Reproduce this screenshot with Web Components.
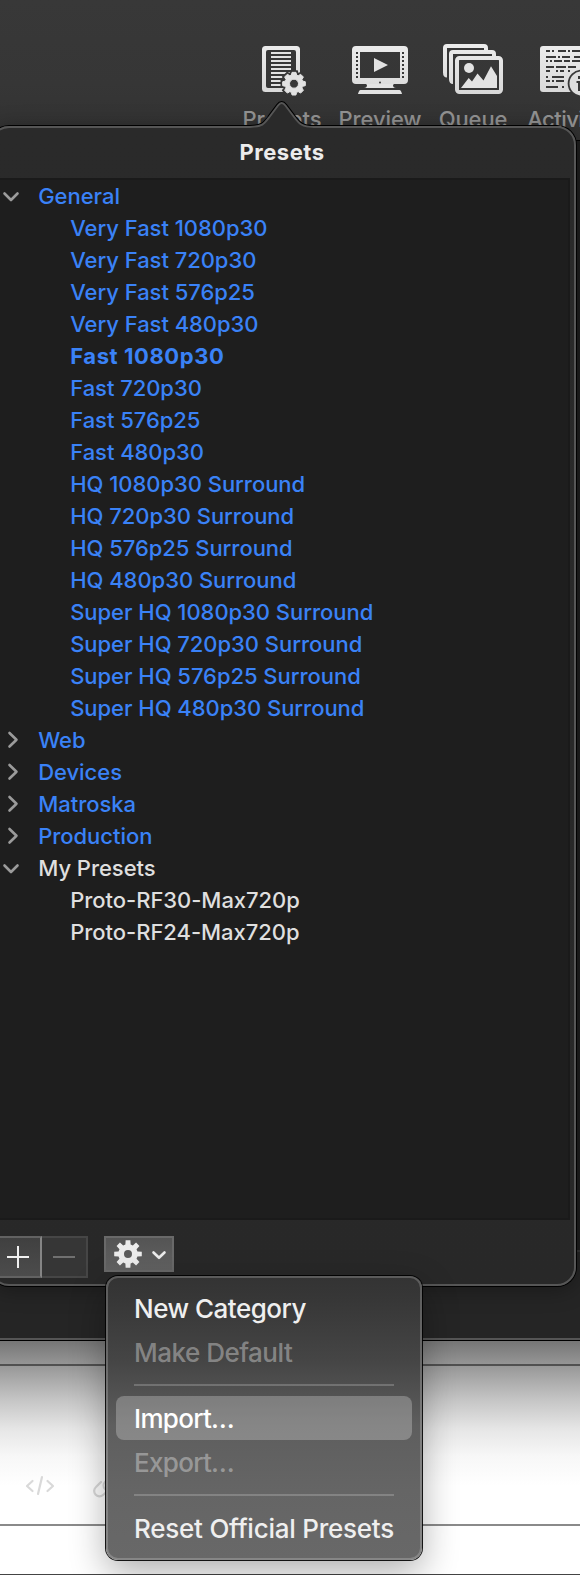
<!DOCTYPE html>
<html lang="en">
<head>
<meta charset="utf-8">
<title>Presets</title>
<style>
    html, body { margin: 0; }
    body {
        position: relative;
        width: 580px;
        height: 1575px;
        overflow: hidden;
        background: #fff;
        font-family: Inter, "Liberation Sans", sans-serif;
        font-size: 22px;
    }
</style>
</head>
<body>
<app-window></app-window>
<editor-page></editor-page>
<preset-popover heading="Presets">
    <preset-row open>General</preset-row>
    <preset-row child>Very Fast 1080p30</preset-row>
    <preset-row child>Very Fast 720p30</preset-row>
    <preset-row child>Very Fast 576p25</preset-row>
    <preset-row child>Very Fast 480p30</preset-row>
    <preset-row child default>Fast 1080p30</preset-row>
    <preset-row child>Fast 720p30</preset-row>
    <preset-row child>Fast 576p25</preset-row>
    <preset-row child>Fast 480p30</preset-row>
    <preset-row child>HQ 1080p30 Surround</preset-row>
    <preset-row child>HQ 720p30 Surround</preset-row>
    <preset-row child>HQ 576p25 Surround</preset-row>
    <preset-row child>HQ 480p30 Surround</preset-row>
    <preset-row child>Super HQ 1080p30 Surround</preset-row>
    <preset-row child>Super HQ 720p30 Surround</preset-row>
    <preset-row child>Super HQ 576p25 Surround</preset-row>
    <preset-row child>Super HQ 480p30 Surround</preset-row>
    <preset-row>Web</preset-row>
    <preset-row>Devices</preset-row>
    <preset-row>Matroska</preset-row>
    <preset-row>Production</preset-row>
    <preset-row open custom>My Presets</preset-row>
    <preset-row child custom>Proto-RF30-Max720p</preset-row>
    <preset-row child custom>Proto-RF24-Max720p</preset-row>
    <preset-actions slot="footer"></preset-actions>
</preset-popover>
<action-menu>
    <menu-item>New Category</menu-item>
    <menu-item disabled>Make Default</menu-item>
    <menu-line></menu-line>
    <menu-item active style="--tracking: -0.7px">Import…</menu-item>
    <menu-item disabled style="--tracking: -0.7px">Export…</menu-item>
    <menu-line></menu-line>
    <menu-item style="--tracking: -0.24px">Reset Official Presets</menu-item>
</action-menu>

<script>
// shared base: clones the template markup into an open shadow root
class BaseElement extends HTMLElement {
    constructor() {
        super();
        this.attachShadow({ mode: "open" });
        const template = document.createElement("template");
        template.innerHTML = this.constructor.markup;
        this.shadowRoot.appendChild(template.content.cloneNode(true));
    }
}

// cog outline: square-ish teeth around a ring, with a round hole
function gearPath(cx, cy, body, outer, hole, inner, tip) {
    let d = "";
    for (let i = 0; i < 8; i++) {
        const a = i * Math.PI / 4;
        [[body, -inner], [outer, -tip], [outer, tip], [body, inner]].forEach(([r, off], j) => {
            d += (i + j ? "L" : "M") + (cx + r * Math.cos(a + off)).toFixed(2) + " " + (cy + r * Math.sin(a + off)).toFixed(2);
        });
    }
    return d + `ZM${cx - hole} ${cy}a${hole} ${hole} 0 1 0 ${hole * 2} 0a${hole} ${hole} 0 1 0 ${-hole * 2} 0Z`;
}

// draws [x, width] runs as 2px bars
function bars(rows) {
    return rows.map(([y, ...runs]) => runs.map(([x, w]) => `<rect x="${x}" y="${y}" width="${w}" height="2"/>`).join("")).join("");
}

const ICONS = {
    presets: { x: 250, art: `
        <path fill="url(#g)" fill-rule="evenodd" d="M265.500 46h31a3.500 3.500 0 0 1 3.500 3.500v39a3.500 3.500 0 0 1-3.500 3.500h-31a3.500 3.500 0 0 1-3.500-3.500v-39a3.500 3.500 0 0 1 3.500-3.500zM268 50a2 2 0 0 0-2 2v34a2 2 0 0 0 2 2h26a2 2 0 0 0 2-2V52a2 2 0 0 0-2-2z"/>
        <g fill="#e2e2e2">${bars([52, 56, 60, 64, 68, 72, 76, 80, 84].map(y => [y, [271, 20]]))}</g>
        <path fill="#373737" stroke="#373737" stroke-width="3.500" d="${gearPath(294, 83.7, 9.4, 12, .1, .34, .2)}"/>
        <path fill="#e2e2e2" stroke="#e2e2e2" stroke-linejoin="round" fill-rule="evenodd" d="${gearPath(294, 83.7, 9, 11.5, 4.5, .3, .17)}"/>` },
    preview: { x: 348, art: `
        <path fill="url(#g)" fill-rule="evenodd" d="M356 46h48a4 4 0 0 1 4 4v30a4 4 0 0 1-4 4h-48a4 4 0 0 1-4-4V50a4 4 0 0 1 4-4zM360 52v26h40V52z"/>
        <path fill="#e2e2e2" d="M374 58l14 7-14 7zM366 84h28l-1 1q0 3 3 3h-32q3 0 3-3zM360.500 90h39q1.500 0 2.500 4h-44q1-4 2.500-4z"/>
        <g fill="#373737">${bars([52, 56, 60, 64, 68, 72, 76].map(y => [y, [356, 2], [402, 2]]))}<circle cx="380" cy="82.400" r="1"/></g>` },
    queue: { x: 441, art: `
        <g fill="none" stroke="url(#g)" stroke-width="4">
            <path d="M447 75.500q-2 0-2-3V48q0-2 2-2h37q2 0 2 2v2.500"/>
            <path d="M453 82q-2 0-2-3V54q0-2 2-2h39q2 0 2 2v2.500"/>
            <rect x="457" y="58" width="44" height="34" rx="2.500"/>
        </g>
        <circle cx="469" cy="68" r="5" fill="#e2e2e2"/>
        <path fill="#e2e2e2" d="M461 88l7.700-10 3.300 3.500 5.500-8 6 7 7.500-14.300 6 9.800v12z"/>` },
    activity: { x: 533, art: `
        <rect x="540" y="46" width="50" height="46" rx="3" fill="url(#g)"/>
        <g fill="#373737">${bars([
            [50, [546, 4], [552, 2], [558, 8], [568, 2], [572, 8]],
            [56, [546, 10], [558, 2], [562, 8], [574, 6]],
            [60, [546, 2], [550, 2], [554, 8], [564, 6], [572, 8]],
            [66, [546, 8], [556, 10], [568, 8]],
            [70, [546, 4], [556, 2], [560, 4], [568, 2]],
            [76, [546, 2], [552, 12]],
            [80, [546, 4], [552, 2], [556, 8]],
            [86, [546, 12], [562, 2]]
        ])}</g>
        <circle cx="581.500" cy="83.500" r="13.800" fill="#373737"/>
        <circle cx="581.500" cy="83.500" r="12" fill="#dedede"/>
        <path fill="#373737" d="M576.500 81h6v10h-4.500v-8h-1.500zM578 76h4v3h-4z"/>` }
};

class ToolbarItem extends BaseElement {
    static markup = `
        <style>
            :host { display: flex; flex: none; flex-direction: column; align-items: center; width: var(--w); }
            svg { display: block; flex: none; }
            span { margin-top: 5px; line-height: 32px; font-weight: 500; letter-spacing: var(--tracking, 0); color: #939393; white-space: nowrap; }
        </style>
        <svg width="64" height="56"></svg>
        <span><slot></slot></span>`;
    connectedCallback() {
        const icon = ICONS[this.getAttribute("icon")];
        const svg = this.shadowRoot.querySelector("svg");
        svg.setAttribute("viewBox", `${icon.x} 42 64 56`);
        svg.innerHTML = `<defs><linearGradient id="g" gradientUnits="userSpaceOnUse" x1="0" y1="44" x2="0" y2="94"><stop stop-color="#ececec"/><stop offset="1" stop-color="#d8d8d8"/></linearGradient></defs>${icon.art}`;
    }
}
customElements.define("toolbar-item", ToolbarItem);

class AppWindow extends BaseElement {
    static markup = `
        <style>
            :host { display: flex; flex-direction: column; box-sizing: border-box; height: 1341px; background: #1e1e1e; border-bottom: 1px solid #000; }
            .toolbar { display: flex; gap: 18px; box-sizing: border-box; height: 141px; padding: 42px 0 0 243px; overflow: hidden; background: linear-gradient(#383838, #363636 60%, #323232); border-bottom: 1px solid #000; }
            .body { flex: 1; }
            .status { box-sizing: border-box; height: 90px; border-top: 2px solid #343434; border-bottom: 2px solid #555; background: #252525; }
        </style>
        <div class="toolbar">
            <toolbar-item icon="presets" style="--w: 78px">Presets</toolbar-item>
            <toolbar-item icon="preview" style="--w: 82px; --tracking: -.1px">Preview</toolbar-item>
            <toolbar-item icon="queue" style="--w: 68px; --tracking: -.1px">Queue</toolbar-item>
            <toolbar-item icon="activity" style="--w: 80px; --tracking: -.55px">Activity</toolbar-item>
        </div>
        <div class="body"></div>
        <div class="status"></div>`;
}
customElements.define("app-window", AppWindow);

// the white document behind the window, with the window's shadow falling on it
class EditorPage extends BaseElement {
    static markup = `
        <style>
            :host { display: flex; flex-direction: column; box-sizing: border-box; height: 234px; border-bottom: 1px solid #444;
                background: linear-gradient(#767676, #999 26px, #c4c4c4 58px, #e6e6e6 88px, #f7f7f7 115px, #fff 145px); }
            .top { height: 23px; border-bottom: 2px solid #505050; }
            .tools { display: flex; align-items: center; gap: 36px; height: 158px; padding-left: 24px; border-bottom: 2px solid #8a8a8a; }
            svg { display: block; margin-top: 82px; }
            path { fill: none; stroke: #d9d9d9; stroke-width: 2.200; stroke-linecap: round; stroke-linejoin: round; }
        </style>
        <div class="top"></div>
        <div class="tools">
            <svg width="32" height="24"><path d="M8.500 7L3 12l5.500 5M23.500 7l5.500 5-5.500 5M18 3l-4 17"/></svg>
            <svg width="32" height="24"><path d="M9 8l-5 5a5 5 0 0 0 7 8l6-5a5 5 0 0 0-1-7.500M13 15a5 5 0 0 1 0-7l5-5a5 5 0 0 1 7 7l-4 4"/></svg>
        </div>`;
}
customElements.define("editor-page", EditorPage);

class PresetPopover extends BaseElement {
    static markup = `
        <style>
            :host { position: absolute; left: -10px; top: 126px; display: flex; flex-direction: column; box-sizing: border-box; width: 586px; height: 1160px; padding: 0 4px 0 8px;
                border: 2px solid #565656; border-radius: 19px; background: linear-gradient(#2a2a2a, #282828);
                box-shadow: 0 0 0 1px #000, 0 3px 22px rgba(0, 0, 0, .35); }
            .arrow { position: absolute; left: 258px; top: -30px; }
            h1 { margin: 0; padding-right: 6px; height: 50px; line-height: 48px; font-size: 22px; font-weight: 700; letter-spacing: .5px; text-align: center; color: #ececec; }
            .list { box-sizing: border-box; height: 1042px; border: solid #1a1a1a; border-width: 2px 2px 2px 0; background: #1e1e1e; }
        </style>
        <svg class="arrow" width="64" height="34">
            <path fill="none" stroke="#000" stroke-width="4" d="M0 29C12 29 14.500 25.500 19 19.500L28 7.500Q31.700 2.500 35.400 7.500L44.500 19.500C49 25.500 52 29 64 29"/>
            <path fill="#2a2a2a" d="M0 30C12 29 14.500 25.500 19 19.500L28 7.500Q31.700 2.500 35.400 7.500L44.500 19.500C49 25.500 52 29 64 30V34H0Z"/>
            <path fill="none" stroke="#565656" stroke-width="2" d="M0 29C12 29 14.500 25.500 19 19.500L28 7.500Q31.700 2.500 35.400 7.500L44.500 19.500C49 25.500 52 29 64 29"/>
        </svg>
        <h1></h1>
        <div class="list"><slot></slot></div>
        <slot name="footer"></slot>`;
    connectedCallback() {
        this.shadowRoot.querySelector("h1").textContent = this.getAttribute("heading");
    }
}
customElements.define("preset-popover", PresetPopover);

class PresetRow extends BaseElement {
    static markup = `
        <style>
            :host { display: flex; align-items: center; height: 32px; line-height: 32px; font-weight: 450; letter-spacing: -.04px; color: #3a82f7; white-space: nowrap; }
            :host([custom]) { color: #dfdfdf; }
            :host([default]) { font-weight: 700; letter-spacing: .58px; }
            .mark { flex: none; width: 38.200px; height: 32px; }
            :host([child]) .mark { width: 70.200px; }
            path { fill: none; stroke: #9b9b9b; stroke-width: 2.600; stroke-linecap: round; stroke-linejoin: round; }
        </style>
        <svg class="mark"><path/></svg>
        <span><slot></slot></span>`;
    connectedCallback() {
        if (this.hasAttribute("child")) return;
        const d = this.hasAttribute("open") ? "M4.500 13.500L11 20l6.500-6.500" : "M9.500 9L16.500 15.700 9.500 22.500";
        this.shadowRoot.querySelector("path").setAttribute("d", d);
    }
}
customElements.define("preset-row", PresetRow);

class PresetActions extends BaseElement {
    static markup = `
        <style>
            :host { display: flex; align-items: flex-start; padding-top: 16px; }
            button { display: block; box-sizing: border-box; margin: 0; padding: 0; border: 2px solid; }
            .add { width: 42px; height: 42px; border-color: #626262 #858585 #626262 #626262; border-left: 0; background: linear-gradient(#404040, #4c4c4c); }
            .remove { width: 46px; height: 42px; border-color: #464646; border-left: 0; background: #363636; }
            .more { margin-left: 16px; width: 70px; height: 36px; border-color: #696969; background: linear-gradient(#545454, #626262); }
            svg { display: block; }
        </style>
        <button class="add" aria-label="Add"><svg width="40" height="38"><path d="M7 19h22M18 8v22" stroke="#f0f0f0" stroke-width="2"/></svg></button>
        <button class="remove" aria-label="Remove"><svg width="44" height="38"><path d="M11 19h22" stroke="#707070" stroke-width="2"/></svg></button>
        <button class="more" aria-label="Actions"><svg width="66" height="32">
            <path fill="#ececec" fill-rule="evenodd" d="${gearPath(22, 16, 9.8, 14, 4, .27, .17)}"/>
            <path fill="none" stroke="#ececec" stroke-width="2.600" stroke-linecap="round" stroke-linejoin="round" d="M47.500 14.500l5.500 5.300 5.500-5.300"/>
        </svg></button>`;
}
customElements.define("preset-actions", PresetActions);

class ActionMenu extends BaseElement {
    static markup = `
        <style>
            :host { position: absolute; left: 106px; top: 1276px; display: flex; flex-direction: column; box-sizing: border-box; width: 316px; height: 284px; padding: 8px;
                border: 2px solid rgba(255, 255, 255, .2); border-radius: 12px; font-size: 26px; font-weight: 450;
                background: linear-gradient(#333, #373737 24px, #454545 84px, #5e5e5e 150px, #656565 215px, #686868) border-box;
                box-shadow: 0 0 0 1px rgba(0, 0, 0, .9), 0 12px 36px rgba(0, 0, 0, .32); }
        </style>
        <slot></slot>`;
}
customElements.define("action-menu", ActionMenu);

class MenuItem extends BaseElement {
    static markup = `
        <style>
            :host { display: block; box-sizing: border-box; height: 44px; padding: 1px 0 0 18px; line-height: 43px; border-radius: 8px; letter-spacing: var(--tracking, -.5px); color: #efefef; white-space: nowrap; }
            :host([disabled]) { color: rgba(255, 255, 255, .36); }
            :host([active]) { background: rgba(255, 255, 255, .25); color: #fff; }
        </style>
        <slot></slot>`;
}
customElements.define("menu-item", MenuItem);

class MenuLine extends BaseElement {
    static markup = `
        <style>
            :host { display: block; height: 2px; margin: 10px 18px; background: rgba(255, 255, 255, .2); }
        </style>`;
}
customElements.define("menu-line", MenuLine);
</script>
</body>
</html>
